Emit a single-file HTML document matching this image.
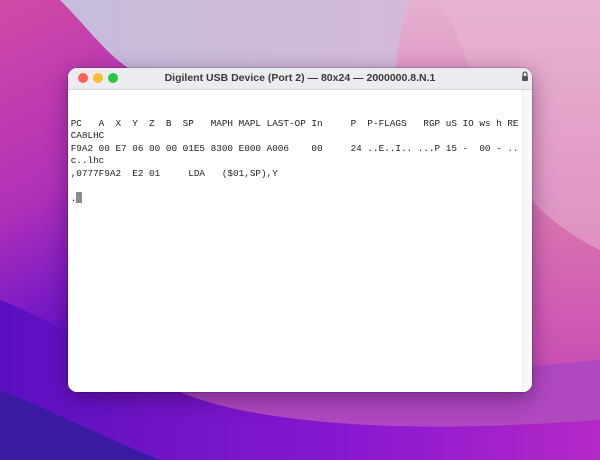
<!DOCTYPE html>
<html><head><style>
html,body{margin:0;padding:0;width:600px;height:460px;overflow:hidden}
body{position:relative;background:#b060c8}
.bg{position:absolute;inset:0}
.win{position:absolute;left:68px;top:68px;width:464px;height:324px;border-radius:9px;background:#fff;overflow:hidden;box-shadow:0 6px 22px rgba(40,0,60,.45),0 0 0 .5px rgba(0,0,0,.3)}
.tb{position:absolute;left:0;top:0;right:0;height:21px;background:#ecebf0;border-bottom:1px solid #d6d4da}
.dot{position:absolute;top:5px;width:10px;height:10px;border-radius:50%}
.title{position:absolute;left:0;right:0;top:4px;text-align:center;font:bold 10.5px "Liberation Sans",sans-serif;color:#3a3a3a}
.sb{position:absolute;right:0;top:22px;bottom:0;width:9px;background:#f8f8f8;border-left:1px solid #ececec}
pre{position:absolute;left:2.7px;top:50px;margin:0;font:9.33px/12.4px "Liberation Mono",monospace;color:#222}
.cur{display:inline-block;width:5.6px;height:11px;background:#8c8c8c;vertical-align:-2px}
</style></head><body>
<svg class="bg" width="600" height="460" viewBox="0 0 600 460">
<defs>
<linearGradient id="g0" x1="0" y1="0" x2="1" y2="0"><stop offset="0" stop-color="#c2bcdc"/><stop offset="1" stop-color="#dcb8d6"/></linearGradient>
<linearGradient id="g1" x1="0" y1="0" x2="0.2" y2="1"><stop offset="0" stop-color="#d24aa6"/><stop offset="0.45" stop-color="#b030b8"/><stop offset="0.75" stop-color="#6a14c8"/><stop offset="1" stop-color="#4a12b0"/></linearGradient>
<linearGradient id="g2" x1="0" y1="0" x2="0" y2="1"><stop offset="0" stop-color="#e6b0d0"/><stop offset="0.5" stop-color="#d870b0"/><stop offset="1" stop-color="#c038b8"/></linearGradient>
<linearGradient id="g3" x1="0" y1="0" x2="1" y2="0"><stop offset="0" stop-color="#5a10c0"/><stop offset="0.6" stop-color="#8a18d0"/><stop offset="1" stop-color="#b428c8"/></linearGradient>
</defs>
<rect width="600" height="460" fill="url(#g0)"/>
<path d="M0 0 H60 C90 30 110 60 140 75 C160 85 170 95 180 110 V460 H0Z" fill="url(#g1)"/>
<path d="M410 0 H600 V460 H380 C420 380 430 300 410 230 C395 160 385 70 410 0Z" fill="url(#g2)"/>
<path d="M440 0 H600 V250 C560 230 520 200 500 150 C480 90 460 40 440 0Z" fill="#e8b8d4" opacity=".5"/>
<path d="M150 360 C250 380 400 380 600 360 V460 H150Z" fill="#b048c0"/>
<path d="M0 300 C80 330 140 390 240 410 C340 430 460 430 600 420 V460 H0Z" fill="url(#g3)"/>
<path d="M0 390 C50 410 110 440 160 460 H0Z" fill="#3a1aa0"/>
</svg>
<div class="win">
<div class="tb">
<div class="dot" style="left:10px;background:#fe5f57"></div>
<div class="dot" style="left:25px;background:#febc2e"></div>
<div class="dot" style="left:40px;background:#28c840"></div>
<div class="title">Digilent USB Device (Port 2) — 80x24 — 2000000.8.N.1</div>
<svg style="position:absolute;right:3px;top:3px" width="8" height="10" viewBox="0 0 8 10"><path d="M2 5V3a2 2 0 0 1 4 0v2" fill="none" stroke="#555" stroke-width="1.2"/><rect x="1" y="5" width="6" height="5" rx="1" fill="#555"/></svg>
</div>
<div class="sb"></div>
<pre>PC   A  X  Y  Z  B  SP   MAPH MAPL LAST-OP In     P  P-FLAGS   RGP uS IO ws h RE
CA8LHC
F9A2 00 E7 06 00 00 01E5 8300 E000 A006    00     24 ..E..I.. ...P 15 -  00 - ..
c..lhc
,0777F9A2  E2 01     LDA   ($01,SP),Y

.<span class="cur"></span></pre>
</div>
</body></html>
